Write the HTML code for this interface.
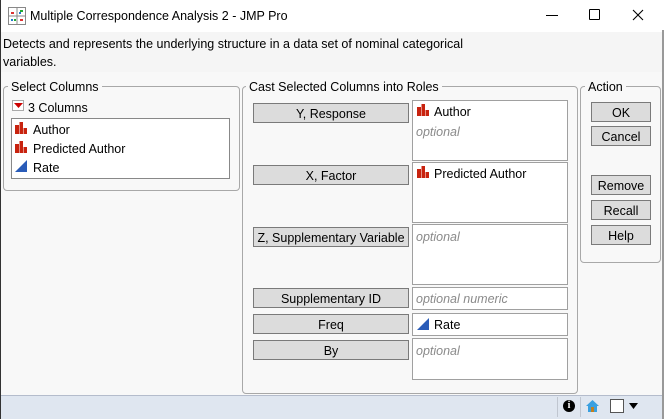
<!DOCTYPE html>
<html><head><style>
*{box-sizing:border-box;margin:0;padding:0}
body{width:664px;height:419px;overflow:hidden;background:#f8f8f8;font-family:"Liberation Sans",sans-serif;font-size:12px;color:#000;position:relative}
.a{position:absolute}
.grp{position:absolute;border:1px solid #a8a8a8;border-radius:4px}
.gt{position:absolute;background:#f8f8f8;padding:0 3px;font-size:12.5px;line-height:14px}
.btn{position:absolute;background:#dcdcdc;border:1px solid #7a7a7a;text-align:center;line-height:20px;font-size:12.5px;height:20px;white-space:nowrap}
.box{position:absolute;background:#fff;border:1px solid #a0a0a0}
.opt{color:#8a8a8a;font-style:italic;font-size:12.5px}
.item{position:absolute;font-size:12.5px;white-space:nowrap;line-height:15px}
</style></head><body>
<div class="a" style="left:0;top:0;width:664px;height:32px;background:#fff"></div>
<svg class="a" style="left:8px;top:7px" width="18" height="18" viewBox="0 0 18 18"><rect x=".5" y=".5" width="17" height="17" fill="#fff" stroke="#888"/><line x1="9" y1="0" x2="9" y2="18" stroke="#888"/><line x1="0" y1="9" x2="18" y2="9" stroke="#888"/><rect x="3" y="5" width="3" height="2" fill="#d33"/><rect x="12" y="3" width="3" height="2" fill="#2a3"/><rect x="11" y="5" width="2" height="2" fill="#27c"/><rect x="3" y="12" width="2" height="2" fill="#27c"/><rect x="6" y="12" width="2" height="2" fill="#2a3"/><rect x="12" y="12" width="3" height="2" fill="#d33"/></svg>
<div class="a" style="left:30px;top:9px;font-size:12.5px">Multiple Correspondence Analysis 2 - JMP Pro</div>
<div class="a" style="left:546px;top:15px;width:12px;height:1px;background:#000"></div>
<div class="a" style="left:589px;top:9px;width:11px;height:11px;border:1px solid #000;border-radius:1px"></div>
<svg class="a" style="left:632px;top:9px" width="12" height="12"><path d="M1 1L11 11M11 1L1 11" stroke="#000" stroke-width="1.1"/></svg>
<div class="a" style="left:0;top:32px;width:664px;height:40px;background:#f5f5f5"></div>
<div class="a" style="left:3px;top:35px;font-size:12.5px;line-height:18px">Detects and represents the underlying structure in a data set of nominal categorical<br>variables.</div>
<div class="a" style="left:0;top:0;width:1px;height:419px;background:#333"></div>
<div class="a" style="right:0;top:30px;width:2px;height:389px;background:#999"></div>

<div class="grp" style="left:3px;top:86px;width:237px;height:105px"></div>
<div class="gt" style="left:8px;top:80px">Select Columns</div>
<div class="a" style="left:12px;top:100px;width:12px;height:11px;border:1px solid #aaa;background:#fff"></div>
<svg class="a" style="left:14px;top:103px" width="9" height="5"><path d="M0 0H9L4.5 5Z" fill="#c00"/></svg>
<div class="item" style="left:28px;top:101px">3 Columns</div>
<div class="box" style="left:11px;top:118px;width:219px;height:61px;border-color:#888"></div>
<svg class="a" style="left:15px;top:122px" width="12" height="12"><path d="M0 3h4v9H0zM4.5 0h3.5v12H4.5zM8.5 6h3.5v6H8.5z" fill="#c8230f"/></svg>
<div class="item" style="left:33px;top:123px">Author</div>
<svg class="a" style="left:15px;top:141px" width="12" height="12"><path d="M0 3h4v9H0zM4.5 0h3.5v12H4.5zM8.5 6h3.5v6H8.5z" fill="#c8230f"/></svg>
<div class="item" style="left:33px;top:142px">Predicted Author</div>
<svg class="a" style="left:15px;top:160px" width="12" height="12"><path d="M0 12L12 0V12Z" fill="#2a5cb8"/></svg>
<div class="item" style="left:33px;top:161px">Rate</div>

<div class="grp" style="left:242px;top:86px;width:336px;height:308px"></div>
<div class="gt" style="left:246px;top:80px">Cast Selected Columns into Roles</div>
<div class="btn" style="left:253px;top:103px;width:156px">Y, Response</div>
<div class="btn" style="left:253px;top:165px;width:156px">X, Factor</div>
<div class="btn" style="left:253px;top:227px;width:156px">Z, Supplementary Variable</div>
<div class="btn" style="left:253px;top:288px;width:156px">Supplementary ID</div>
<div class="btn" style="left:253px;top:314px;width:156px">Freq</div>
<div class="btn" style="left:253px;top:340px;width:156px">By</div>
<div class="box" style="left:412px;top:100px;width:156px;height:61px"></div>
<svg class="a" style="left:417px;top:104px" width="12" height="12"><path d="M0 3h4v9H0zM4.5 0h3.5v12H4.5zM8.5 6h3.5v6H8.5z" fill="#c8230f"/></svg>
<div class="item" style="left:434px;top:105px">Author</div>
<div class="item opt" style="left:416px;top:125px">optional</div>
<div class="box" style="left:412px;top:162px;width:156px;height:61px"></div>
<svg class="a" style="left:417px;top:166px" width="12" height="12"><path d="M0 3h4v9H0zM4.5 0h3.5v12H4.5zM8.5 6h3.5v6H8.5z" fill="#c8230f"/></svg>
<div class="item" style="left:434px;top:167px">Predicted Author</div>
<div class="box" style="left:412px;top:224px;width:156px;height:61px"></div>
<div class="item opt" style="left:416px;top:230px">optional</div>
<div class="box" style="left:412px;top:287px;width:156px;height:23px"></div>
<div class="item opt" style="left:416px;top:292px">optional numeric</div>
<div class="box" style="left:412px;top:313px;width:156px;height:23px"></div>
<svg class="a" style="left:417px;top:318px" width="12" height="12"><path d="M0 12L12 0V12Z" fill="#2a5cb8"/></svg>
<div class="item" style="left:434px;top:318px">Rate</div>
<div class="box" style="left:412px;top:338px;width:156px;height:42px"></div>
<div class="item opt" style="left:416px;top:344px">optional</div>

<div class="grp" style="left:580px;top:86px;width:81px;height:177px"></div>
<div class="gt" style="left:585px;top:80px">Action</div>
<div class="btn" style="left:591px;top:102px;width:60px">OK</div>
<div class="btn" style="left:591px;top:126px;width:60px">Cancel</div>
<div class="btn" style="left:591px;top:175px;width:60px">Remove</div>
<div class="btn" style="left:591px;top:200px;width:60px">Recall</div>
<div class="btn" style="left:591px;top:225px;width:60px">Help</div>

<div class="a" style="left:1px;top:395px;width:661px;height:24px;background:#dfe6f0;border-top:1px solid #b4bccc"></div>
<div class="a" style="left:557px;top:397px;width:1px;height:20px;background:#c0c6d0"></div>
<div class="a" style="left:580px;top:397px;width:1px;height:20px;background:#c0c6d0"></div>
<div class="a" style="left:563px;top:400px;width:12px;height:12px;border-radius:50%;background:#000;color:#fff;font-size:10px;font-weight:bold;text-align:center;line-height:12px;font-family:'Liberation Serif',serif">i</div>
<svg class="a" style="left:586px;top:400px" width="13" height="12"><path d="M6.5 0L13 6H11V12H2V6H0Z" fill="#3aa0e0"/><rect x="5" y="7" width="3" height="5" fill="#c08020"/></svg>
<div class="a" style="left:610px;top:399px;width:14px;height:14px;background:#fff;border:1px solid #555"></div>
<svg class="a" style="left:629px;top:403px" width="9" height="6"><path d="M0 0H9L4.5 6Z" fill="#000"/></svg>
</body></html>
